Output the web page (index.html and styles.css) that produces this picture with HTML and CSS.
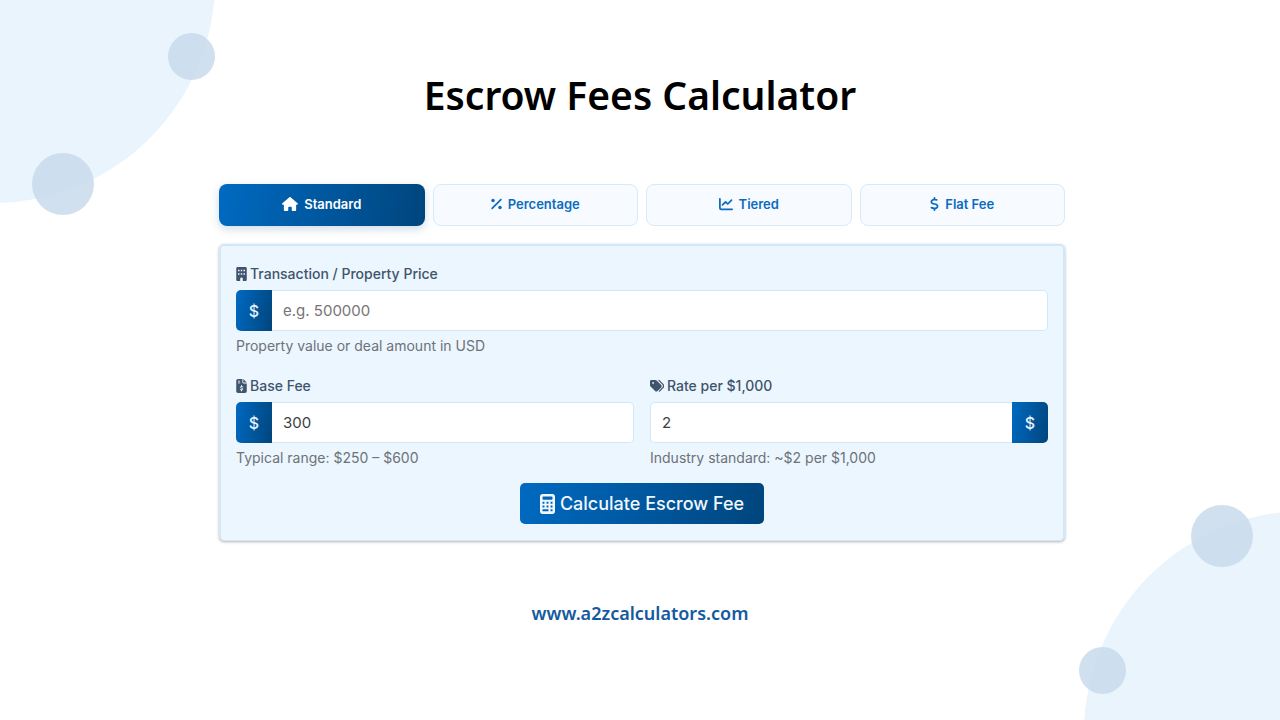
FILE: index.html
```html
<!DOCTYPE html>
<html lang="en">
<head>
  <meta charset="UTF-8" />
  <meta name="viewport" content="width=device-width, initial-scale=1" />
  <title>Escrow Fees Calculator</title>
  <link rel="stylesheet" href="styles.css">
</head>
<body>

  <!-- corner decoration -->
  <div class="corner corner-top">
    <span class="disc disc-large"></span>
    <span class="disc disc-small"></span>
    <span class="disc disc-medium"></span>
  </div>
  <div class="corner corner-bottom">
    <span class="disc disc-large"></span>
    <span class="disc disc-small"></span>
    <span class="disc disc-medium"></span>
  </div>

  <main>
    <h1>Escrow Fees Calculator</h1>

    <div class="calculator">
      <div class="tabs">
        <button type="button" class="tab active">
          <svg width="16" height="14" viewBox="0 0 576 512" fill="currentColor"><path d="M575.8 255.5c0 18-15 32.1-32 32.1h-32l.7 160.2c0 2.7-.2 5.4-.5 8.1V472c0 22.1-17.9 40-40 40H456c-1.1 0-2.2 0-3.3-.1c-1.4 .1-2.8 .1-4.2 .1H416 392c-22.1 0-40-17.9-40-40V448 384c0-17.7-14.3-32-32-32H256c-17.7 0-32 14.3-32 32v64 24c0 22.1-17.9 40-40 40H160 128.1c-1.5 0-3-.1-4.5-.2c-1.2 .1-2.4 .2-3.6 .2H104c-22.1 0-40-17.9-40-40V360c0-.9 0-1.9 .1-2.8V287.6H32c-18 0-32-14-32-32.1c0-9 3-17 10-24L266.4 8c7-7 15-8 22-8s15 2 21 7L564.8 231.5c8 7 12 15 11 24z"/></svg>
          Standard
        </button>
        <button type="button" class="tab">
          <svg width="11" height="14" viewBox="0 0 384 512" fill="currentColor"><path d="M374.600 118.600c12.500-12.500 12.500-32.800 0-45.300s-32.800-12.500-45.300 0l-320 320c-12.500 12.500-12.500 32.800 0 45.300s32.800 12.500 45.300 0l320-320z"/><circle cx="64" cy="128" r="64"/><circle cx="320" cy="384" r="64"/></svg>
          Percentage
        </button>
        <button type="button" class="tab">
          <svg width="14" height="14" viewBox="0 0 512 512" fill="none" stroke="currentColor" stroke-width="64" stroke-linecap="round" stroke-linejoin="round"><path d="M32 64v336c0 27 21 48 48 48h400M128 288l112-112 80 80 138-138"/></svg>
          Tiered
        </button>
        <button type="button" class="tab">
          <svg width="9" height="14" viewBox="0 0 320 512" fill="currentColor"><path d="M160 0c17.700 0 32 14.300 32 32V67.700c1.600 .2 3.100 .4 4.700 .7c.4 .1 .7 .1 1.100 .2l48 8.800c17.400 3.200 28.900 19.900 25.700 37.200s-19.900 28.900-37.200 25.700l-47.500-8.700c-31.300-4.600-58.900-1.500-78.300 6.200s-27.200 18.300-29 28.100c-2 10.700-.5 16.700 1.200 20.400c1.800 3.900 5.500 8.300 12.800 13.200c16.300 10.700 41.300 17.700 73.700 26.300l2.900 .8c28.600 7.600 63.600 16.800 89.600 33.800c14.200 9.300 27.600 21.900 35.900 39.500c8.500 17.900 10.300 37.900 6.400 59.200c-6.900 38-33.100 63.400-65.600 76.700c-13.700 5.600-28.600 9.200-44.400 11V480c0 17.700-14.300 32-32 32s-32-14.300-32-32V445.100c-.4-.1-.9-.1-1.300-.2c-24.400-3.800-64.500-14.300-91.500-26.300c-16.100-7.200-23.400-26.100-16.200-42.200s26.100-23.400 42.200-16.200c20.900 9.300 55.300 18.500 75.200 21.600c31.900 4.700 58.200 2 76-5.300c16.900-6.900 24.600-16.900 26.800-28.900c1.900-10.600 .4-16.700-1.300-20.400c-1.900-4-5.600-8.400-13-13.300c-16.400-10.700-41.500-17.700-74-26.300l-2.800-.7C119.400 279.300 84.400 270 58.400 253c-14.200-9.300-27.500-22-35.800-39.600c-8.400-17.900-10.100-37.900-6.100-59.200C23.700 116 52.300 91.200 84.800 78.300c13.300-5.300 27.900-8.900 43.200-11V32c0-17.700 14.300-32 32-32z"/></svg>
          Flat Fee
        </button>
      </div>

      <form class="panel">
        <div class="field field-wide">
          <label for="price">
            <svg width="11" height="14" viewBox="0 0 384 512" fill="currentColor" fill-rule="evenodd"><path d="M48 0C21 0 0 21 0 48v416c0 27 21 48 48 48h96v-80c0-27 21-48 48-48s48 21 48 48v80h96c27 0 48-21 48-48V48c0-27-21-48-48-48zM64 96h56v56H64zM164 96h56v56h-56zM264 96h56v56h-56zM64 224h56v56H64zM164 224h56v56h-56zM264 224h56v56h-56z"/></svg>
            Transaction / Property Price
          </label>
          <div class="input-group">
            <span class="addon">$</span>
            <input type="text" id="price" inputmode="decimal" placeholder="e.g. 500000" />
          </div>
          <small>Property value or deal amount in USD</small>
        </div>

        <div class="field">
          <label for="baseFee">
            <svg width="11" height="14" viewBox="0 0 384 512" fill="currentColor"><path d="M64 0C29 0 0 29 0 64v384c0 35 29 64 64 64h256c35 0 64-29 64-64V160H256c-18 0-32-14-32-32V0zM256 0v128h128z"/><path d="M64 80h80M64 144h80" stroke="#ecf6ff" stroke-width="30"/><path d="M244 288c-20-14-90-26-92 14 0 42 88 24 88 68 0 40-70 34-96 14M192 240v36M192 396v40" fill="none" stroke="#ecf6ff" stroke-width="36" stroke-linecap="round"/></svg>
            Base Fee
          </label>
          <div class="input-group">
            <span class="addon">$</span>
            <input type="text" id="baseFee" inputmode="decimal" value="300" />
          </div>
          <small>Typical range: $250 – $600</small>
        </div>

        <div class="field">
          <label for="rate">
            <svg width="14" height="14" viewBox="0 0 512 512" fill="currentColor" fill-rule="evenodd"><path d="M0 80v149c0 17 7 33 19 45l168 168c25 25 65 25 90 0l134-134c25-25 25-65 0-90L243 51c-12-12-28-19-45-19H48C21 32 0 53 0 80zm112 32a32 32 0 1 1 0 64 32 32 0 1 1 0-64z"/><path d="M328 50l136 137c38 38 38 99 0 137L345 444" fill="none" stroke="currentColor" stroke-width="46" stroke-linecap="round"/></svg>
            Rate per $1,000
          </label>
          <div class="input-group addon-end">
            <input type="text" id="rate" inputmode="decimal" value="2" />
            <span class="addon">$</span>
          </div>
          <small>Industry standard: ~$2 per $1,000</small>
        </div>

        <button type="button" class="calculate">
          <svg width="15" height="20" viewBox="0 0 384 512" fill="currentColor" fill-rule="evenodd"><path d="M64 0C29 0 0 29 0 64v384c0 35 29 64 64 64h256c35 0 64-29 64-64V64c0-35-29-64-64-64zM80 64h224c9 0 16 7 16 16v48c0 9-7 16-16 16H80c-9 0-16-7-16-16V80c0-9 7-16 16-16zM64 200h50v50H64zM167 200h50v50h-50zM270 200h50v50h-50zM64 296h50v50H64zM167 296h50v50h-50zM270 296h50v50h-50zM64 392h153v50H64zM270 392h50v50h-50z"/></svg>
          Calculate Escrow Fee
        </button>
      </form>
    </div>

    <a class="site-link" href="#">www.a2zcalculators.com</a>
  </main>

</body>
</html>
```
FILE: styles.css
```css
* {
  box-sizing: border-box;
}
body {
  margin: 0;
  min-height: 100vh;
  position: relative;
  background: #fff;
  font-family: Inter, sans-serif;
}
main {
  position: relative;
  display: flex;
  flex-direction: column;
  align-items: center;
  padding: 67px 16px 40px;
}
h1 {
  margin: 0;
  font-family: "Noto Sans", sans-serif;
  font-size: 39px;
  font-weight: 600;
  line-height: 56px;
  color: #000;
}

/* corner circles */
.corner {
  position: absolute;
  width: 222px;
  height: 222px;
  overflow: hidden;
}
.corner-top {
  top: 0;
  left: 0;
}
.corner-bottom {
  right: 0;
  bottom: 0;
}
.disc {
  position: absolute;
  border-radius: 50%;
  background: rgba(198, 216, 235, 0.8);
}
.disc-large {
  width: 444px;
  height: 444px;
  background: #e9f4fd;
}
.disc-small {
  width: 47px;
  height: 47px;
}
.disc-medium {
  width: 62px;
  height: 62px;
}
.corner-top .disc-large {
  top: -241px;
  left: -229px;
}
.corner-top .disc-small {
  top: 33px;
  left: 168px;
}
.corner-top .disc-medium {
  top: 153px;
  left: 32px;
}
.corner-bottom .disc-large {
  right: -248px;
  bottom: -235px;
}
.corner-bottom .disc-small {
  right: 154px;
  bottom: 26px;
}
.corner-bottom .disc-medium {
  right: 27px;
  bottom: 153px;
}

.calculator {
  width: 100%;
  max-width: 850px;
  margin-top: 61px;
  padding-left: 4px;
}
.tabs {
  display: grid;
  grid-template-columns: repeat(4, 1fr);
  gap: 8px;
  margin-bottom: 18px;
}
.tab {
  display: flex;
  align-items: center;
  justify-content: center;
  gap: 6px;
  height: 42px;
  padding: 0 0 2px;
  border: 1px solid #d5eafb;
  border-radius: 8px;
  background: #f7fbff;
  color: #0b6bbf;
  font-family: inherit;
  font-size: 13px;
  font-weight: 600;
  cursor: pointer;
}
.tab.active {
  border-color: transparent;
  background: linear-gradient(100deg, #006ac1, #00457d) border-box;
  color: #fff;
  box-shadow: 0 3px 10px rgba(0, 70, 130, 0.2);
}

.panel {
  display: grid;
  grid-template-columns: 1fr 1fr;
  column-gap: 16px;
  padding: 18px 15px 16px;
  border: 2px solid #d2e8fa;
  border-bottom-width: 1px;
  border-radius: 5px;
  background: #ecf6ff;
  box-shadow: 0 1px 3px rgba(0, 0, 0, 0.3);
}
.field {
  display: flex;
  flex-direction: column;
}
.field-wide {
  grid-column: 1 / -1;
  margin-bottom: 20px;
}
label {
  display: flex;
  align-items: center;
  gap: 3px;
  margin-bottom: 6px;
  color: #40546b;
  font-size: 14px;
  font-weight: 500;
  line-height: 20px;
}
.input-group {
  display: flex;
  height: 41px;
}
.addon {
  display: flex;
  align-items: center;
  justify-content: center;
  width: 36px;
  border-radius: 5px 0 0 5px;
  background: linear-gradient(100deg, #006ac1, #00457d);
  color: #eaf4fd;
  font-size: 16px;
  font-weight: 500;
}
.input-group input {
  flex: 1;
  min-width: 0;
  padding: 0 11px 1px;
  border: 1px solid #cfe8fc;
  border-left: 0;
  border-radius: 0 5px 5px 0;
  background: #fff;
  color: #3b3f44;
  font-family: inherit;
  font-size: 15px;
}
.input-group input::placeholder {
  color: #757575;
}
.addon-end .addon {
  border-radius: 0 5px 5px 0;
}
.input-group.addon-end input {
  border: 1px solid #cfe8fc;
  border-right: 0;
  border-radius: 5px 0 0 5px;
}
small {
  margin-top: 5px;
  color: #6c7278;
  font-size: 14px;
  line-height: 20px;
}
.calculate {
  grid-column: 1 / -1;
  justify-self: center;
  display: flex;
  align-items: center;
  gap: 5px;
  height: 41px;
  margin-top: 15px;
  padding: 0 20px;
  border: 0;
  border-radius: 5px;
  background: linear-gradient(100deg, #006ac1, #00457d);
  color: #f1f7fd;
  font-family: inherit;
  font-size: 18px;
  font-weight: 500;
  cursor: pointer;
}

.site-link {
  margin-top: 60px;
  color: #145a9e;
  font-family: "Noto Sans", sans-serif;
  font-size: 18px;
  font-weight: 600;
  line-height: 24px;
  text-decoration: none;
}
```
